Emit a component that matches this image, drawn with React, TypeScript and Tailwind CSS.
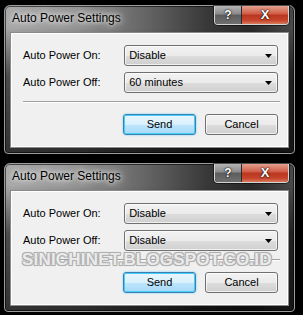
import React from 'react'

const Combo = ({ value }: { value: string }) => (
    <div className="flex h-[21px] w-[155px] items-center justify-between rounded-[3px] border border-[#707070] bg-[linear-gradient(to_bottom,#f2f2f2_0%,#ebebeb_50%,#dddddd_51%,#cfcfcf_100%)] pl-[4px] pr-[4px] shadow-[inset_0_0_0_1px_rgba(255,255,255,0.7)]">
        <span className="text-[11px] leading-none text-black">{value}</span>
        <svg width="7" height="4" viewBox="0 0 7 4" className="mr-[1px]">
            <path d="M0 0H7L3.5 4Z" fill="#000" />
        </svg>
    </div>
)

const DlgButton = ({ label, primary }: { label: string; primary?: boolean }) => (
    <button
        className={
            primary
                ? 'h-[21px] w-[73px] rounded-[3px] border border-[#3c7fb1] bg-[linear-gradient(to_bottom,#eaf6fd_0%,#d9f0fc_50%,#bee6fd_51%,#a7d9f5_100%)] text-[11px] text-black shadow-[inset_0_0_0_1px_#48cdf8,0_0_2px_#5ac8f5]'
                : 'h-[21px] w-[73px] rounded-[3px] border border-[#707070] bg-[linear-gradient(to_bottom,#f2f2f2_0%,#ebebeb_50%,#dddddd_51%,#cfcfcf_100%)] text-[11px] text-black shadow-[inset_0_0_0_1px_rgba(255,255,255,0.7)]'
        }
    >
        {label}
    </button>
)

const Dialog = ({ on, off }: { on: string; off: string }) => (
    <div className="w-[291px] rounded-t-[6px] rounded-b-[4px] border border-[#9c9c9c] bg-[linear-gradient(to_bottom,rgba(0,0,0,0)_0px,rgba(0,0,0,0)_22px,rgba(0,0,0,0.55)_70px,rgba(0,0,0,0.7)_100%),linear-gradient(to_right,#a8a8a8_0%,#929292_25%,#626262_50%,#383838_70%,#2a2a2a_85%,#4a4a4a_100%)] px-[5px] pb-[5px] shadow-[inset_0_0_0_1px_rgba(0,0,0,0.6)]">
        {/* title bar */}
        <div className="flex h-[26px] items-start justify-between">
            <span className="mt-[6px] ml-[2px] text-[12px] leading-none text-black [text-shadow:0_0_4px_rgba(255,255,255,0.95),0_0_8px_rgba(255,255,255,0.8),0_0_14px_rgba(255,255,255,0.5)]">
                Auto Power Settings
            </span>
            <div className="flex h-[19px] overflow-hidden rounded-b-[4px] border border-t-0 border-[#d4d4d4] shadow-[0_0_0_1px_rgba(0,0,0,0.5)]">
                <div className="flex w-[27px] items-center justify-center border-r border-[#2a2a2a] bg-[linear-gradient(to_bottom,#b4b4b4_0%,#8a8a8a_45%,#5c5c5c_50%,#707070_100%)] text-[12px] font-bold text-white [text-shadow:0_0_1px_#000,0_0_2px_#000]">
                    ?
                </div>
                <div className="flex w-[46px] items-center justify-center bg-[linear-gradient(to_bottom,#e4a08e_0%,#cf5a44_45%,#b9361e_50%,#c7452d_80%,#d97a5c_100%)] text-[13px] font-bold text-white [text-shadow:0_0_1px_#000,0_0_2px_#000]">
                    X
                </div>
            </div>
        </div>
        {/* client area */}
        <div className="border border-[#8a8a8a] bg-[#f0f0f0] pt-[12px] pb-[12px] pl-[12px] pr-[10px] shadow-[inset_0_0_0_1px_#ffffff]">
            <div className="flex items-center">
                <span className="w-[102px] text-[11px] leading-none text-black">Auto Power On:</span>
                <Combo value={on} />
            </div>
            <div className="mt-[6px] flex items-center">
                <span className="w-[102px] text-[11px] leading-none text-black">Auto Power Off:</span>
                <Combo value={off} />
            </div>
            <div className="mt-[8px] h-[2px] w-[257px] border-t border-[#a0a0a0] border-b border-b-white" />
            <div className="mt-[11px] flex justify-end gap-[9px]">
                <DlgButton label="Send" primary />
                <DlgButton label="Cancel" />
            </div>
        </div>
    </div>
)

export default function App() {
    return (
        <div className="relative h-[315px] w-[303px] bg-black pl-[4px] pt-[5px] font-['Liberation_Sans',Arial,sans-serif]">
            <div className="flex flex-col gap-[9px]">
                <Dialog on="Disable" off="60 minutes" />
                <Dialog on="Disable" off="Disable" />
            </div>
            <div className="absolute top-[251px] left-[22px] text-[17px] font-bold leading-none tracking-[0.2px] text-[rgba(255,255,255,0.75)] [text-shadow:1px_1px_0_#b0b0b0,-1px_-1px_0_#b0b0b0,1px_-1px_0_#b0b0b0,-1px_1px_0_#b0b0b0,0_0_2px_#a0a0a0]">
                SINICHINET.BLOGSPOT.CO.ID
            </div>
        </div>
    )
}
